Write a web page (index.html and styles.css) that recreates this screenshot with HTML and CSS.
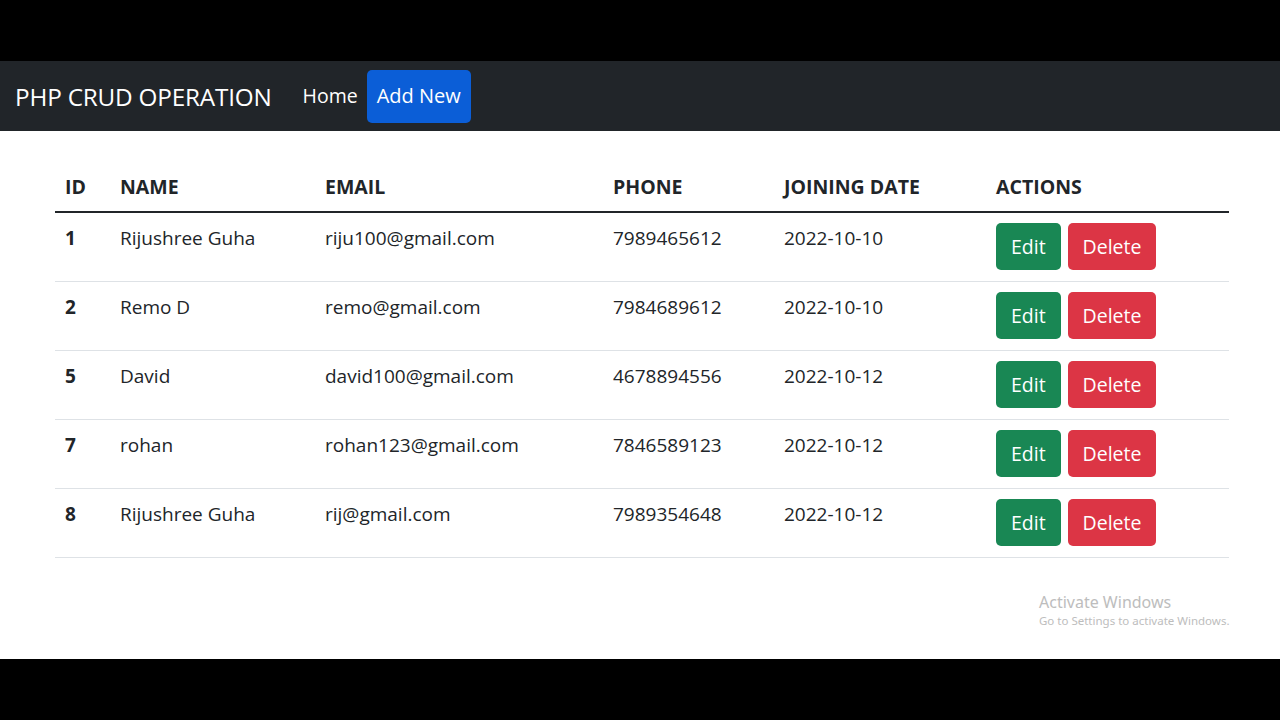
FILE: index.html
```html
<!DOCTYPE html>
<html lang="en">
<head>
  <meta charset="UTF-8">
  <meta name="viewport" content="width=device-width, initial-scale=1.0">
  <title>PHP CRUD OPERATION</title>
  <link rel="stylesheet" href="styles.css">
</head>
<body>
  <div class="letterbox"></div>

  <div class="screen">
    <nav class="navbar">
      <a class="brand" href="#">PHP CRUD OPERATION</a>
      <ul class="nav-links">
        <li><a href="#">Home</a></li>
        <li><a href="#" class="active">Add New</a></li>
      </ul>
    </nav>

    <div class="container">
      <table class="data-table">
        <colgroup>
          <col class="col-id">
          <col class="col-name">
          <col class="col-email">
          <col class="col-phone">
          <col class="col-date">
          <col class="col-actions">
        </colgroup>
        <thead>
          <tr>
            <th>ID</th>
            <th>NAME</th>
            <th>EMAIL</th>
            <th>PHONE</th>
            <th>JOINING DATE</th>
            <th>ACTIONS</th>
          </tr>
        </thead>
        <tbody>
          <tr>
            <td class="id">1</td>
            <td>Rijushree Guha</td>
            <td>riju100@gmail.com</td>
            <td>7989465612</td>
            <td>2022-10-10</td>
            <td><a href="#" class="btn btn-edit">Edit</a> <a href="#" class="btn btn-delete">Delete</a></td>
          </tr>
          <tr>
            <td class="id">2</td>
            <td>Remo D</td>
            <td>remo@gmail.com</td>
            <td>7984689612</td>
            <td>2022-10-10</td>
            <td><a href="#" class="btn btn-edit">Edit</a> <a href="#" class="btn btn-delete">Delete</a></td>
          </tr>
          <tr>
            <td class="id">5</td>
            <td>David</td>
            <td>david100@gmail.com</td>
            <td>4678894556</td>
            <td>2022-10-12</td>
            <td><a href="#" class="btn btn-edit">Edit</a> <a href="#" class="btn btn-delete">Delete</a></td>
          </tr>
          <tr>
            <td class="id">7</td>
            <td>rohan</td>
            <td>rohan123@gmail.com</td>
            <td>7846589123</td>
            <td>2022-10-12</td>
            <td><a href="#" class="btn btn-edit">Edit</a> <a href="#" class="btn btn-delete">Delete</a></td>
          </tr>
          <tr>
            <td class="id">8</td>
            <td>Rijushree Guha</td>
            <td>rij@gmail.com</td>
            <td>7989354648</td>
            <td>2022-10-12</td>
            <td><a href="#" class="btn btn-edit">Edit</a> <a href="#" class="btn btn-delete">Delete</a></td>
          </tr>
        </tbody>
      </table>
    </div>

    <div class="watermark">
      <p class="watermark-title">Activate Windows</p>
      <p class="watermark-sub">Go to Settings to activate Windows.</p>
    </div>
  </div>

  <div class="letterbox"></div>
</body>
</html>
```

FILE: styles.css
```css
body {
  margin: 0;
  padding: 0;
  background-color: #000;
  font-family: "Open Sans", "Noto Sans", Arial, sans-serif;
  color: #212529;
}

.letterbox {
  height: 61px;
  background-color: #000;
}

.screen {
  position: relative;
  height: 598px;
  background-color: #fff;
}

/* Navbar */
.navbar {
  height: 70px;
  background-color: #212529;
  display: flex;
  align-items: center;
  padding: 0 15px;
}

.brand {
  color: #fff;
  text-decoration: none;
  font-size: 24.3px;
  margin-right: 26px;
  letter-spacing: -0.2px;
}

.nav-links {
  list-style: none;
  margin: 0;
  padding: 0;
  display: flex;
  align-items: center;
  gap: 4px;
}

.nav-links a {
  display: block;
  color: #fff;
  text-decoration: none;
  font-size: 19.5px;
  line-height: 30px;
  padding: 0 5px;
}

.nav-links a.active {
  background-color: #0b5ed7;
  border-radius: 5px;
  padding: 11.5px 10px;
  font-size: 20px;
}

/* Table */
.container {
  padding: 30px 51px 0 55px;
}

.data-table {
  width: 100%;
  border-collapse: collapse;
  table-layout: fixed;
  font-size: 19px;
}

.col-id { width: 55px; }
.col-name { width: 205px; }
.col-email { width: 288px; }
.col-phone { width: 171px; }
.col-date { width: 212px; }

.data-table th {
  text-align: left;
  font-weight: 700;
  font-size: 19.5px;
  padding: 11px 10px 9px;
  line-height: 30px;
  border-bottom: 2px solid #212529;
}

.data-table td {
  padding: 10px 10px 11px;
  line-height: 30px;
  vertical-align: top;
  border-bottom: 1px solid #dee2e6;
  white-space: nowrap;
}

.data-table td.id {
  font-weight: 700;
}

.btn {
  display: inline-block;
  color: #fff;
  text-decoration: none;
  font-size: 19.5px;
  line-height: 30px;
  padding: 8.5px 15px;
  border-radius: 5px;
}

.btn-edit {
  background-color: #198754;
  margin-right: 2px;
}

.btn-delete {
  background-color: #dc3545;
}

/* Activate Windows overlay */
.watermark {
  position: absolute;
  left: 1039px;
  top: 530px;
  color: #bdbdbd;
  font-family: "Noto Sans", "Open Sans", sans-serif;
}

.watermark p {
  margin: 0;
}

.watermark-title {
  font-size: 16px;
  line-height: 22px;
}

.watermark-sub {
  font-size: 11.5px;
  line-height: 16px;
  margin-top: 2px;
}
```
